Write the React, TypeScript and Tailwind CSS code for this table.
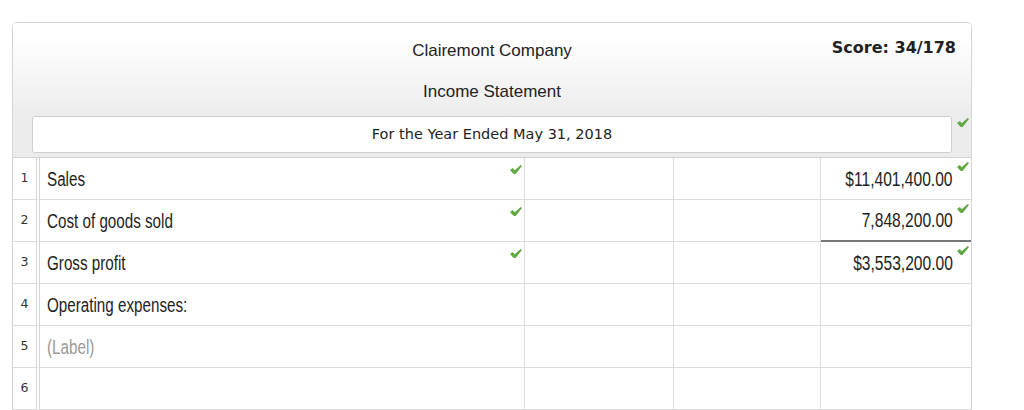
import React from 'react';

const narrow = "font-['Liberation_Sans',sans-serif]";

type Row = {
  num: number;
  label: string;
  placeholder?: boolean;
  labelCheck?: boolean;
  amount?: string;
  amountCheck?: boolean;
  underline?: boolean;
};

const rows: Row[] = [
  { num: 1, label: 'Sales', labelCheck: true, amount: '$11,401,400.00', amountCheck: true },
  { num: 2, label: 'Cost of goods sold', labelCheck: true, amount: '7,848,200.00', amountCheck: true, underline: true },
  { num: 3, label: 'Gross profit', labelCheck: true, amount: '$3,553,200.00', amountCheck: true },
  { num: 4, label: 'Operating expenses:' },
  { num: 5, label: '(Label)', placeholder: true },
  { num: 6, label: '' },
];

// heavy green tick used for graded cells
function Check({ className }: { className: string }) {
  return (
    <svg viewBox="0 0 12 9" className={`absolute w-[12px] h-[9px] ${className}`}>
      <path d="M0 5 L2.9 3 L4.7 5.2 L10.7 0 L12 0.9 L5.6 9 L3.7 9 Z" fill="#5fa842" />
    </svg>
  );
}

export default function App() {
  return (
    <div className="min-h-screen bg-white pt-[22px] pl-[12px]">
      <div className="w-[960px] rounded-t-[5px] border border-b-0 border-[#d5d5d5] overflow-hidden">
        {/* Header */}
        <div className="bg-gradient-to-b from-white from-10% to-[#ececec] to-70% border-b border-[#d2d2d2] pt-[15px] pb-[4px]">
          <div className="grid grid-cols-[1fr_auto_1fr] items-start">
            <div />
            <div className="h-[26px] leading-[26px] text-[17px] text-[#222] font-['Liberation_Sans',sans-serif]">
              Clairemont Company
            </div>
            <div className="flex justify-end pr-[15px]">
              <span className="leading-[20px] text-[16px] font-bold text-[#222] font-['DejaVu_Sans',sans-serif]">
                Score: 34/178
              </span>
            </div>
          </div>
          <div className="mt-[15px] h-[26px] leading-[26px] text-center text-[17px] text-[#222] font-['Liberation_Sans',sans-serif]">
            Income Statement
          </div>
          <div className="relative mt-[11px] px-[19px]">
            <div className="h-[37px] rounded-[3px] border border-[#cfcfcf] bg-white flex items-center justify-center text-[14.5px] text-[#1e1e1e] font-['DejaVu_Sans',sans-serif]">
              For the Year Ended May 31, 2018
            </div>
            <Check className="right-[2px] top-[2px]" />
          </div>
        </div>

        {/* Rows */}
        {rows.map((r) => (
          <div key={r.num} className="flex h-[42px] bg-white">
            <div className="w-[27px] border-r-4 border-double border-r-[#d6d6d6] border-b border-b-[#dcdcdc] flex items-center justify-center text-[12.5px] text-[#333] font-['DejaVu_Sans',sans-serif]">
              {r.num}
            </div>
            <div
              className={`relative w-[485px] border-r border-b border-[#dcdcdc] flex items-center pl-[7px] text-[20px] ${narrow} ${
                r.placeholder ? 'text-[#9a9a9a]' : 'text-[#1e1e1e]'
              }`}
            >
              <span className="inline-block origin-left scale-x-[0.76] whitespace-nowrap">{r.label}</span>
              {r.labelCheck && <Check className="right-[2px] top-[7px]" />}
            </div>
            <div className="w-[149px] border-r border-b border-[#dcdcdc]" />
            <div className="w-[147px] border-r border-b border-[#dcdcdc]" />
            <div
              className={`relative w-[150px] flex items-center justify-end pr-[18px] text-[20px] text-[#1e1e1e] ${narrow} ${
                r.underline ? 'border-b-2 border-[#777]' : 'border-b border-[#dcdcdc]'
              }`}
            >
              <span className="inline-block origin-right scale-x-[0.78] whitespace-nowrap">{r.amount}</span>
              {r.amountCheck && <Check className="right-[2px] top-[4px]" />}
            </div>
          </div>
        ))}
      </div>
    </div>
  );
}
